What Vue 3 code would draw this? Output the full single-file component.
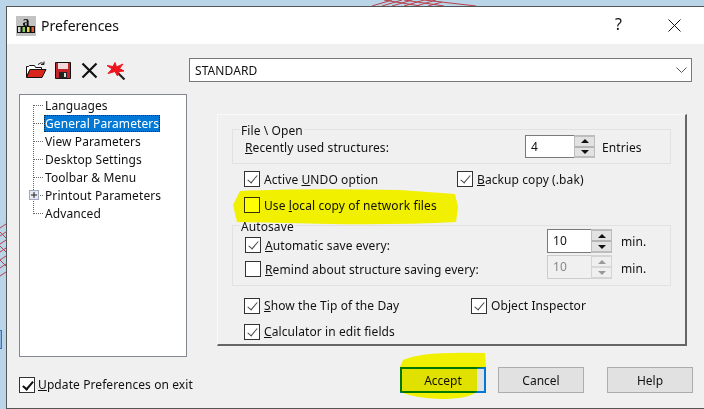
<script setup>
const treeItems = ['Languages', 'General Parameters', 'View Parameters', 'Desktop Settings', 'Toolbar & Menu', 'Printout Parameters', 'Advanced']
</script>

<template>
  <div class="screen">
    <svg class="backdrop" width="704" height="409" viewBox="0 0 704 409">
      <path d="M372 6L392 0M382 6L402 0M392 6L412 0M404 6L424 0M416 6L436 0M428 6L442 2M384 0L420 6M404 0L444 6M424 0L476 6" stroke="#b8404a" fill="none" />
      <path d="M0 228L6 224M0 236L6 232M0 244L6 240M0 252L6 248M0 260L6 256M0 268L6 264M0 276L6 272M0 232L6 238M0 246L6 252M0 260L6 266" stroke="#b8404a" fill="none" />
      <rect x="-2" y="330.500" width="3.500" height="18" fill="#8fb6e0" stroke="#3a6fb0" />
    </svg>

    <div class="dialog">
      <header class="title">
        <svg class="logo" width="20" height="20" viewBox="0 0 20 20">
          <rect width="20" height="20" fill="#c2c2c2" />
          <rect x="1" y="10" width="18" height="7" fill="#111" />
          <rect x="2" y="11" width="2.500" height="5" fill="#d8d8d8" />
          <rect x="6.500" y="11" width="2.500" height="5" fill="#8ccb5e" />
          <rect x="11" y="11" width="2.500" height="5" fill="#ead94a" />
          <rect x="15.500" y="11" width="2.500" height="5" fill="#e05a3a" />
          <text x="10" y="9.500" text-anchor="middle" class="logo-a">a</text>
        </svg>
        <span class="title-text">Preferences</span>
        <span class="help-q">?</span>
        <svg class="close" width="13" height="13" viewBox="0 0 13 13"><path d="M0.500 0.500L12.500 12.500M12.500 0.500L0.500 12.500" stroke="#111" fill="none" /></svg>
      </header>

      <div class="body">
        <div class="toolbar">
          <div class="tools">
            <svg width="22" height="18" viewBox="0 0 22 18">
              <path d="M1.500 16V5.500h2l1-1h5l1 2h6v2H5L1.500 16z" fill="#fff" stroke="#111" />
              <path d="M1.500 16.500L5 8.500h16l-4 8z" fill="#d8261c" stroke="#111" />
              <path d="M13 3.500Q16 0.500 19 2.500M19 0.500v3h-3" fill="none" stroke="#222" />
            </svg>
            <svg width="16" height="17" viewBox="0 0 16 17">
              <path d="M0.500 0.500h15v16h-15z" fill="#c3242a" stroke="#111" />
              <rect x="3" y="1" width="10" height="6" fill="#f3d9d9" />
              <rect x="4" y="10" width="8" height="6.500" fill="#222" />
              <rect x="9" y="11" width="2" height="4" fill="#ddd" />
            </svg>
            <svg width="19" height="17" viewBox="0 0 19 17">
              <path d="M3.500 1.500L17.500 15.500M17.500 1.500L3.500 15.500" stroke="#111" stroke-width="2.200" fill="none" />
            </svg>
            <svg width="20" height="19" viewBox="0 0 20 19">
              <path d="M10 10L18.500 18.500" stroke="#222" stroke-width="2.200" fill="none" />
              <path d="M9 1.500l1.500 4.500L17 3l-3.500 4.500L18 10l-5 .5L11.500 15 9 10.500 2 12.500 6 8 1 4.500 7 5.500z" fill="#f0141e" stroke="#f0141e" />
            </svg>
          </div>
          <div class="combo">
            <span>STANDARD</span>
            <svg width="11" height="6" viewBox="0 0 11 6"><path d="M0.500 0.500L5.500 5.500L10.500 0.500" fill="none" stroke="#555" /></svg>
          </div>
        </div>

        <div class="main">
          <div class="tree">
            <i class="tree-line" />
            <div v-for="(item, i) in treeItems" :key="item" class="node">
              <svg v-if="i === 5" class="plus" width="10" height="10" viewBox="0 0 10 10">
                <rect x="0.500" y="0.500" width="9" height="9" fill="#e6e8f4" stroke="#a0a8c0" />
                <path d="M2 5H8M5 2V8" stroke="#222" fill="none" />
              </svg>
              <i class="branch" />
              <span class="node-text" :class="{ selected: i === 1 }">{{ item }}</span>
            </div>
          </div>

          <div class="panel">
            <fieldset class="group file-group">
              <legend>File \ Open</legend>
              <div class="row file-row">
                <span class="pad-label"><u>R</u>ecently used structures:</span>
                <div class="spin spin-file">
                  <span class="spin-value">4</span>
                  <span class="spin-btns"><b class="up" /><b class="down" /></span>
                </div>
                <span class="unit-entries">Entries</span>
              </div>
            </fieldset>

            <div class="check-row first-checks">
              <label class="check col-a"><span class="box on" /><span>Active <u>U</u>NDO option</span></label>
              <label class="check"><span class="box on" /><span><u>B</u>ackup copy (.bak)</span></label>
            </div>
            <div class="check-row local-row">
              <label class="check"><span class="box" /><span>Use <u>l</u>ocal copy of network files</span></label>
            </div>

            <fieldset class="group auto-group">
              <legend>Autosave</legend>
              <div class="row auto-row first-auto">
                <label class="check"><span class="box on" /><span><u>A</u>utomatic save every:</span></label>
                <div class="spin spin-auto">
                  <span class="spin-value">10</span>
                  <span class="spin-btns"><b class="up" /><b class="down" /></span>
                </div>
                <span class="unit-min">min.</span>
              </div>
              <div class="row auto-row second-auto">
                <label class="check"><span class="box" /><span><u>R</u>emind about structure saving every:</span></label>
                <div class="spin spin-auto disabled">
                  <span class="spin-value">10</span>
                  <span class="spin-btns"><b class="up" /><b class="down" /></span>
                </div>
                <span class="unit-min">min.</span>
              </div>
            </fieldset>

            <div class="check-row tip-row">
              <label class="check col-b"><span class="box on" /><span class="raised"><u>S</u>how the Tip of the Day</span></label>
              <label class="check"><span class="box on" /><span class="raised">Object Inspector</span></label>
            </div>
            <div class="check-row calc-row">
              <label class="check"><span class="box on" /><span class="raised"><u>C</u>alculator in edit fields</span></label>
            </div>
          </div>
        </div>

        <div class="footer">
          <label class="check update"><span class="box on dark" /><span><u>U</u>pdate Preferences on exit</span></label>
          <div class="buttons">
            <button class="btn primary">Accept</button>
            <button class="btn">Cancel</button>
            <button class="btn help">Help</button>
          </div>
        </div>
      </div>
    </div>

    <svg class="marker" width="704" height="409" viewBox="0 0 704 409">
      <path d="M240 191Q300 188 400 190L455 194L458 207L456 222Q400 225 330 224L237 222L233 205z" fill="#ffff00" />
      <path d="M400 367L403 360Q420 351 485 353L486 367L477 368L477 391Q470 399 440 399Q415 398 400 392z" fill="#ffff00" />
    </svg>
  </div>
</template>

<style>
html, body { margin: 0; background: #bad5e8; overflow: hidden; }
</style>

<style scoped>
.screen {
  position: relative;
  width: 704px;
  height: 409px;
  overflow: hidden;
  background: #bad5e8;
  font-family: "Noto Sans", "Open Sans", sans-serif;
  font-size: 12px;
  letter-spacing: 0.09px;
  color: #111;
}
.backdrop { position: absolute; left: 0; top: 0; }
.dialog {
  position: relative;
  box-sizing: border-box;
  margin-left: 6px;
  top: 6px;
  height: 403px;
  border: 1px solid #555;
  border-right: 0;
  background: #f0f0f0;
  display: flex;
  flex-direction: column;
}
.title {
  height: 37px;
  background: #fff;
  display: flex;
  align-items: center;
  padding-left: 9px;
  flex: none;
}
.logo { overflow: visible; }
.logo-a { font: bold 14px "Liberation Serif", serif; fill: #111; }
.title-text { margin-left: 5px; font-size: 14px; letter-spacing: 0; }
.help-q { margin-left: auto; font-size: 16px; margin-top: -3px; }
.close { margin: 0 23px 0 46px; }
.body { flex: 1; display: flex; flex-direction: column; min-height: 0; }
.toolbar { display: flex; align-items: center; height: 24px; margin-top: 14px; padding-left: 18px; }
.tools { display: flex; align-items: center; gap: 8px; width: 164px; flex: none; }
.combo {
  box-sizing: border-box;
  width: 503px;
  height: 24px;
  background: #fff;
  border: 1px solid #7a7a7a;
  display: flex;
  align-items: center;
  justify-content: space-between;
  padding: 0 4px 0 5px;
}
.main { display: flex; margin-top: 12px; padding-left: 12px; height: 263px; }
.tree {
  position: relative;
  box-sizing: border-box;
  width: 168px;
  height: 263px;
  background: #fff;
  border: 1px solid #828790;
  padding: 1px 0 0 24px;
}
.tree-line {
  position: absolute;
  left: 13px;
  top: 10px;
  height: 109px;
  border-left: 1px dotted #666;
}
.node { position: relative; height: 18px; display: flex; align-items: center; }
.branch { position: absolute; left: -10px; top: 9px; width: 9px; border-top: 1px dotted #666; }
.node-text { padding: 0 1px; line-height: 17px; }
.selected { background: #0078d7; color: #fff; outline: 1px dotted #222; outline-offset: -1px; }
.plus { position: absolute; z-index: 1; left: -15px; top: 4px; }
.panel {
  box-sizing: border-box;
  margin: 20px 0 0 30px;
  width: 470px;
  height: 232px;
  border: 1px solid #f9f9f9;
  border-right: 2px solid #666;
  border-bottom: 2px solid #666;
  padding: 8px 15px 0 14px;
}
.group {
  box-sizing: border-box;
  width: 439px;
  margin: 0;
  padding: 0;
  border: 1px solid #e2e2e2;
}
legend { margin-left: 7px; padding: 2px 1px 0; line-height: 12px; height: 12px; box-sizing: border-box; }
.file-group { height: 41px; }
.auto-group { height: 67px; margin-top: 6px; }
.row { display: flex; align-items: center; }
.file-row { padding-left: 12px; height: 23px; }
.pad-label { width: 280px; margin-top: 2px; }
.spin { box-sizing: border-box; display: flex; }
.spin-file { width: 70px; height: 23px; }
.spin-auto { width: 65px; height: 24px; }
.spin-value {
  flex: 1;
  box-sizing: border-box;
  background: #fff;
  border: 1px solid #7a7a7a;
  border-right: 0;
  padding-left: 5px;
  line-height: 21px;
}
.spin-btns {
  box-sizing: border-box;
  width: 21px;
  display: flex;
  flex-direction: column;
  gap: 2px;
  border: 2px solid #bdbdbd;
  border-left-width: 1px;
  border-right-width: 1px;
  background: #b4b4b4;
}
.spin-btns b { flex: 1; background: #e2e2e2; position: relative; }
.spin-btns b::after {
  content: "";
  position: absolute;
  left: 50%;
  top: 50%;
  margin: -2px 0 0 -4px;
  border: 4px solid transparent;
}
.up::after { border-top: 0 !important; border-bottom-color: #111 !important; }
.down::after { border-bottom: 0 !important; border-top-color: #111 !important; }
.disabled { color: #888; }
.disabled .spin-value { background: #f0f0f0; border-color: #ccc; }
.disabled .spin-btns { background: #d8d8d8; border-color: #d4d4d4; }
.disabled .spin-btns b { background: #efefef; }
.disabled .up::after { border-bottom-color: #999 !important; }
.disabled .down::after { border-top-color: #999 !important; }
.unit-entries { margin-left: 7px; margin-top: 2px; }
.unit-min { margin-left: 9px; }
.auto-row { padding-left: 12px; height: 24px; }
.auto-row .check { width: 302px; }
.first-auto { margin-top: -2px; }
.first-auto .check { margin-top: 8px; }
.second-auto { margin-top: 2px; }
.second-auto .check { margin-top: 4px; }
.second-auto .unit-min { margin-top: 3px; }
.check { display: inline-flex; align-items: center; gap: 4px; white-space: nowrap; }
.update { gap: 3px; }
.raised { margin-top: -2px; }
.box {
  box-sizing: border-box;
  width: 16px;
  height: 16px;
  border: 1px solid #333;
  background: #fff;
  flex: none;
  position: relative;
}
.box.on::after {
  content: "";
  position: absolute;
  left: 5px;
  top: 1px;
  width: 4px;
  height: 9px;
  border: solid #444;
  border-width: 0 1px 1px 0;
  transform: rotate(40deg);
}
.box.dark::after { border-color: #111; border-width: 0 2px 2px 0; }
.check-row { display: flex; padding-left: 12px; height: 16px; }
.first-checks { margin-top: 7px; }
.local-row { margin-top: 10px; }
.tip-row { margin-top: 12px; }
.calc-row { margin-top: 10px; }
.col-a { width: 213px; }
.col-b { width: 227px; }
.footer { display: flex; padding-left: 12px; margin-top: 10px; position: relative; }
.footer > .check { margin-top: 9px; align-self: flex-start; }
.buttons { display: flex; gap: 12px; margin-left: auto; margin-right: 11px; }
.btn {
  box-sizing: border-box;
  width: 86px;
  height: 26px;
  padding: 0;
  background: #e1e1e1;
  border: 1px solid #adadad;
  font: inherit;
  color: #111;
}
.help { margin-left: 11px; }
.primary { border: 2px solid #0078d7; }
.marker { position: absolute; left: 0; top: 0; pointer-events: none; mix-blend-mode: multiply; }
</style>
